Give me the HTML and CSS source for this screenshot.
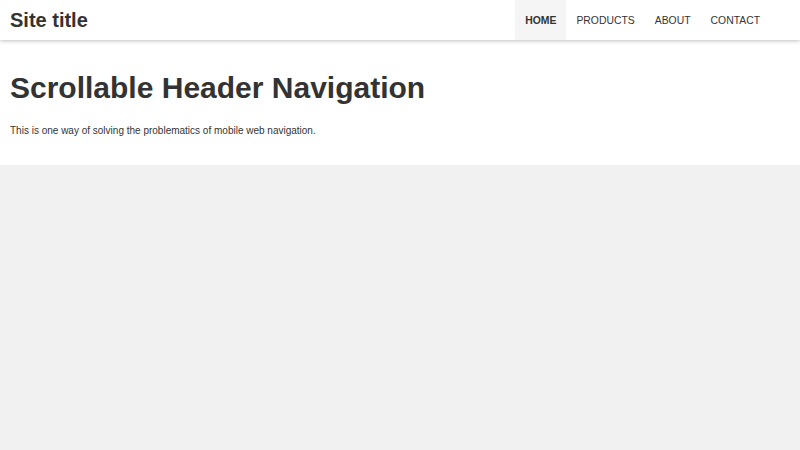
FILE: index.html
```html
<!DOCTYPE html>
<html lang="en">
<head>
<meta charset="utf-8">
<title>Scrollable Header Navigation</title>
<link rel="stylesheet" href="styles.css">
</head>
<body>
<header class="site-header">
  <div class="site-title">Site title</div>
  <nav class="site-nav">
    <a class="nav-link is-active" href="#">Home</a>
    <a class="nav-link" href="#">Products</a>
    <a class="nav-link" href="#">About</a>
    <a class="nav-link" href="#">Contact</a>
  </nav>
</header>
<main class="intro">
  <h1 class="intro-title">Scrollable Header Navigation</h1>
  <p class="intro-text">This is one way of solving the problematics of mobile web navigation.</p>
</main>
</body>
</html>
```

FILE: styles.css
```css
* {
  box-sizing: border-box;
}

html,
body {
  margin: 0;
  height: 100%;
}

body {
  background: #f1f1f1;
  color: #333;
  font-family: "Liberation Sans", Arial, sans-serif;
}

.site-header {
  position: relative;
  z-index: 1;
  display: flex;
  align-items: center;
  justify-content: space-between;
  height: 40px;
  padding: 0 30px 0 10px;
  background: #fff;
  box-shadow: 0 1px 4px rgba(0, 0, 0, 0.25);
}

.site-title {
  font-size: 20px;
  font-weight: bold;
  color: #333;
}

.site-nav {
  display: flex;
  height: 100%;
}

.nav-link {
  display: flex;
  align-items: center;
  padding: 0 10px;
  font-size: 10.4px;
  text-transform: uppercase;
  text-decoration: none;
  color: #333;
}

.nav-link.is-active {
  background: #f5f5f5;
  font-weight: bold;
}

.intro {
  background: #fff;
  padding: 30px 10px 28px;
}

.intro-title {
  margin: 0 0 20px;
  font-size: 30px;
  line-height: 35px;
}

.intro-text {
  margin: 0;
  font-size: 10px;
  line-height: 12px;
}
```
